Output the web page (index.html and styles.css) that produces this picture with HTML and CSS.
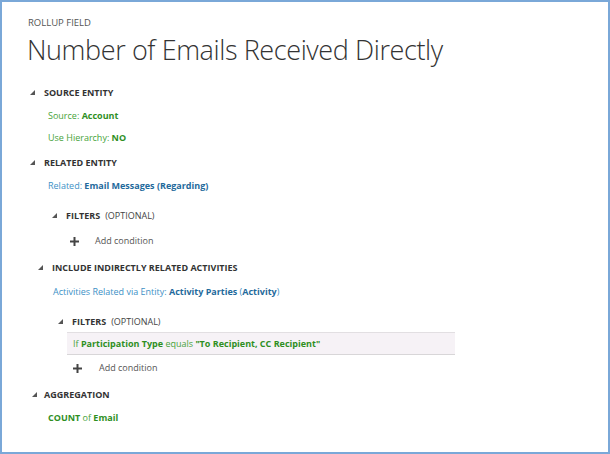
FILE: index.html
```html
<!DOCTYPE html>
<html>
<head>
<meta charset="utf-8">
<link rel="stylesheet" href="styles.css">
</head>
<body>
<div class="frame">
  <div class="eyebrow">ROLLUP FIELD</div>
  <h1 class="title">Number of Emails Received Directly</h1>

  <div class="sec sec-source">
    <svg class="tri" viewBox="0 0 5 5"><polygon points="5,0 5,5 0,5"/></svg>
    <span class="sec-name">SOURCE ENTITY</span>
  </div>
  <div class="line green l-source"><span class="lbl">Source: </span><b>Account</b></div>
  <div class="line green l-hier"><span class="lbl">Use Hierarchy: </span><b>NO</b></div>

  <div class="sec sec-related">
    <svg class="tri" viewBox="0 0 5 5"><polygon points="5,0 5,5 0,5"/></svg>
    <span class="sec-name">RELATED ENTITY</span>
  </div>
  <div class="line blue l-related"><span class="lbl">Related: </span><b>Email Messages (Regarding)</b></div>

  <div class="sec sub sec-filters1">
    <svg class="tri" viewBox="0 0 5 5"><polygon points="5,0 5,5 0,5"/></svg>
    <span class="sec-name">FILTERS</span><span class="opt">(OPTIONAL)</span>
  </div>
  <div class="add add1">
    <svg class="plus" viewBox="0 0 9 9"><rect x="3.5" y="0" width="2" height="9"/><rect x="0" y="3.5" width="9" height="2"/></svg>
    <span>Add condition</span>
  </div>

  <div class="sec sec-include">
    <svg class="tri" viewBox="0 0 5 5"><polygon points="5,0 5,5 0,5"/></svg>
    <span class="sec-name">INCLUDE INDIRECTLY RELATED ACTIVITIES</span>
  </div>
  <div class="line blue l-activities"><span class="lbl">Activities Related via Entity: </span><b>Activity Parties</b><span class="lbl"> (</span><b>Activity</b><span class="lbl">)</span></div>

  <div class="sec sub sec-filters2">
    <svg class="tri" viewBox="0 0 5 5"><polygon points="5,0 5,5 0,5"/></svg>
    <span class="sec-name">FILTERS</span><span class="opt">(OPTIONAL)</span>
  </div>
  <div class="cond green"><span class="lbl">If </span><b>Participation Type</b><span class="lbl"> equals </span><b>"To Recipient, CC Recipient"</b></div>
  <div class="add add2">
    <svg class="plus" viewBox="0 0 9 9"><rect x="3.5" y="0" width="2" height="9"/><rect x="0" y="3.5" width="9" height="2"/></svg>
    <span>Add condition</span>
  </div>

  <div class="sec sec-agg">
    <svg class="tri" viewBox="0 0 5 5"><polygon points="5,0 5,5 0,5"/></svg>
    <span class="sec-name">AGGREGATION</span>
  </div>
  <div class="line green l-count"><b>COUNT</b><span class="lbl"> of </span><b>Email</b></div>
</div>
</body>
</html>
```

FILE: styles.css
```css
* { box-sizing: border-box; }
html, body { margin: 0; padding: 0; background: #fff; }
body {
  font-family: "Open Sans", "Noto Sans", "Liberation Sans", sans-serif;
  color: #333;
}
.frame {
  width: 610px;
  height: 454px;
  border: 2px solid #7aa8d8;
  padding: 14px 0 0 0;
  display: flex;
  flex-direction: column;
  align-items: flex-start;
}
.eyebrow {
  margin-left: 26px;
  font-size: 9.5px;
  line-height: 14px;
  color: #555;
}
.title {
  margin: 3px 0 0 25px;
  font-size: 27px;
  font-weight: 300;
  line-height: 34px;
  color: #333;
  letter-spacing: -0.4px;
}
.sec {
  display: flex;
  align-items: center;
  line-height: 14px;
  font-size: 9px;
  font-weight: 700;
  color: #333;
}
.tri { width: 5px; height: 5px; fill: #555; margin-right: 9px; margin-top: -2px; }
.opt { font-weight: 400; margin-left: 5px; color: #444; }
.line {
  line-height: 14px;
  font-size: 9px;
}
.line b, .cond b { font-weight: 700; }
.green .lbl { color: #47a33a; }
.green b { color: #2f8f1f; }
.blue .lbl { color: #3d91c6; }
.blue b { color: #1f6a9c; }

.sec-source { margin: 19px 0 0 28px; }
.l-source { margin: 9px 0 0 46px; }
.l-hier { margin: 8px 0 0 46px; }
.sec-related { margin: 11px 0 0 28px; }
.l-related { margin: 9px 0 0 46px; }
.sec-filters1 { margin: 16px 0 0 50px; }
.add { display: flex; align-items: center; line-height: 14px; font-size: 9px; color: #555; }
.plus { width: 9px; height: 9px; fill: #444; margin-right: 16px; }
.add1 { margin: 11px 0 0 68px; }
.sec-include { margin: 13px 0 0 36px; }
.l-activities { margin: 10px 0 0 51px; }
.sec-filters2 { margin: 16px 0 0 56px; }
.cond {
  margin: 3px 0 0 65px;
  width: 388px;
  height: 23px;
  line-height: 21px;
  font-size: 9px;
  padding-left: 6px;
  background: #f6f2f6;
  border-top: 1px solid #e2dfe2;
  border-bottom: 1px solid #d8d6d8;
}
.add2 { margin: 6px 0 0 71px; }
.add2 .plus { margin-right: 17px; }
.sec-agg { margin: 13px 0 0 30px; }
.sec-agg .tri { margin-right: 7px; }
.l-count { margin: 9px 0 0 46px; }
```
